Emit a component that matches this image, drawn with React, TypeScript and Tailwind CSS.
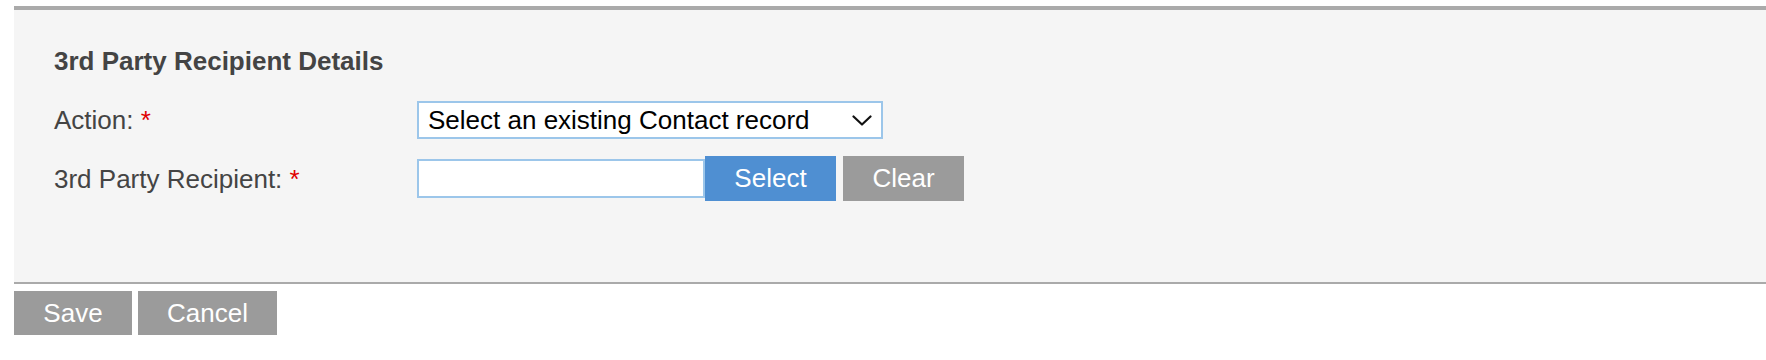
import React from "react";

function Chevron() {
  return (
    <svg width="20" height="11" viewBox="0 0 20 11" fill="none" className="shrink-0">
      <path d="M1.5 1.5l8.5 8 8.5-8" stroke="#111" strokeWidth="2.2" strokeLinecap="round" strokeLinejoin="round" />
    </svg>
  );
}

export default function App() {
  return (
    <div className="min-h-[360px] bg-white pt-[6px] pl-[14px] font-['Liberation_Sans',Arial,sans-serif]">
      <section className="h-[278px] border-t-4 border-b-2 border-[#aaaaaa] bg-[#f5f5f5] pl-[40px] pt-[36px]">
        <h2 className="text-[26px] font-bold leading-[30px] text-[#444]">3rd Party Recipient Details</h2>

        <div className="mt-[25px] flex items-center">
          <label className="w-[363px] text-[26px] leading-[30px] text-[#444]">
            Action: <span className="text-[#e00000]">*</span>
          </label>
          <div className="flex h-[38px] w-[466px] items-center justify-between border-2 border-[#9cc6ea] bg-white pl-[9px] pr-[9px] text-[26px] text-black">
            <span>Select an existing Contact record</span>
            <Chevron />
          </div>
        </div>

        <div className="mt-[17px] flex items-center">
          <label className="w-[363px] text-[26px] leading-[30px] text-[#444]">
            3rd Party Recipient: <span className="text-[#e00000]">*</span>
          </label>
          <input className="h-[39px] w-[288px] border-2 border-[#9cc6ea] bg-white outline-none" />
          <button className="h-[45px] w-[131px] bg-[#4f8fd2] text-[26px] text-white">Select</button>
          <button className="ml-[7px] h-[45px] w-[121px] bg-[#9b9b9b] text-[26px] text-white">Clear</button>
        </div>
      </section>

      <div className="mt-[7px] flex gap-[6px]">
        <button className="h-[44px] w-[118px] bg-[#9b9b9b] text-[26px] text-white">Save</button>
        <button className="h-[44px] w-[139px] bg-[#9b9b9b] text-[26px] text-white">Cancel</button>
      </div>
    </div>
  );
}
